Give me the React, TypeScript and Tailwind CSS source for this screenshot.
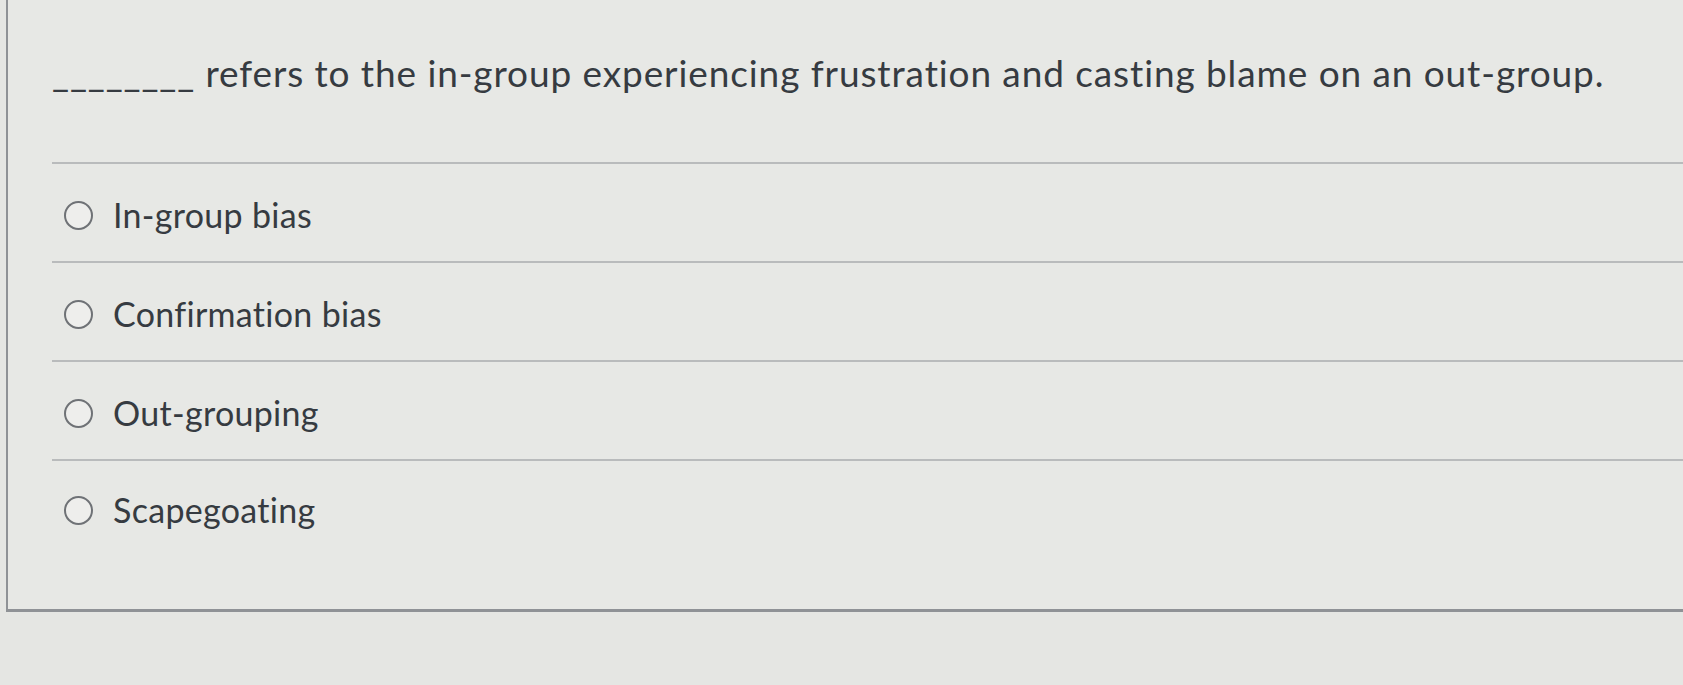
const options = ["In-group bias", "Confirmation bias", "Out-grouping", "Scapegoating"];

function Radio() {
  return (
    <span className="inline-block w-[29px] h-[29px] rounded-full border-[2.5px] border-[#6f7276] bg-[#eeeeec] shrink-0" />
  );
}

export default function App() {
  return (
    <div
      className="w-[1683px] h-[685px] overflow-hidden bg-[#e5e6e3] text-[#363b41]"
      style={{ fontFamily: "Lato, 'Noto Sans', sans-serif" }}
    >
      <div className="ml-[6px] h-[612px] border-l-[2px] border-b-[3px] border-[#8f9296] bg-[#e7e8e5]">
        <div className="pl-[44px] pt-[50px] pb-[66px] text-[37px] leading-[46px] tracking-[0.9px] whitespace-nowrap">
          ________ refers to the in-group experiencing frustration and casting blame on an out-group.
        </div>
        <div className="ml-[44px] border-t-2 border-[#b9bbbc]">
          {options.map((opt, i) => (
            <div
              key={opt}
              className={
                i < options.length - 1
                  ? "flex items-center gap-[20px] pl-[12px] pt-[31px] pb-[26px] border-b-2 border-[#b9bbbc]"
                  : "flex items-center gap-[20px] pl-[12px] pt-[29px]"
              }
            >
              <Radio />
              <span className="text-[34px] leading-[40px] tracking-[0.3px]">{opt}</span>
            </div>
          ))}
        </div>
      </div>
    </div>
  );
}
